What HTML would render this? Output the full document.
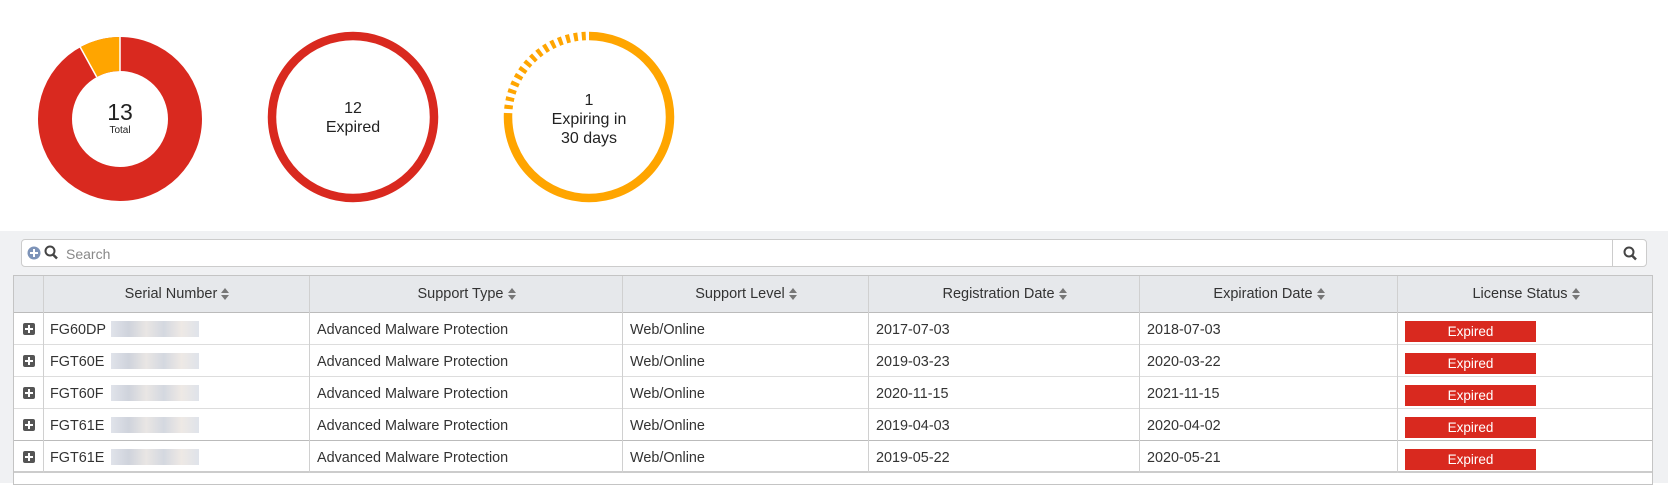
<!DOCTYPE html>
<html><head><meta charset="utf-8"><style>
*{margin:0;padding:0;box-sizing:border-box}
body{width:1668px;height:483px;overflow:hidden;background:#fff;font-family:"Liberation Sans",sans-serif;color:#333;position:relative}
.gray{position:absolute;left:0;top:231px;width:1668px;height:252px;background:#f0f1f3}
.search{position:absolute;left:21px;top:239px;width:1626px;height:28px;background:#fff;border:1px solid #ccc;border-radius:4px}
.search .btn{position:absolute;right:0;top:0;width:34px;height:26px;border-left:1px solid #ccc}
.search .ph{position:absolute;left:44px;top:6px;font-size:14px;color:#888}
.tbl{position:absolute;left:13px;top:275px;width:1640px;height:210px;background:#fff;border:1px solid #c4c4c4}
.hdr{position:absolute;left:0;top:0;width:100%;height:37px;background:#e6e8eb;border-bottom:1px solid #bbb}
.col{position:absolute;top:0;height:210px;border-left:1px solid #d0d0d0}
.ht{position:absolute;top:10px;font-size:14.5px;color:#333;text-align:center}
.row{position:absolute;left:0;width:100%;height:32px;border-bottom:1px solid #ddd}
.c{position:absolute;top:9px;font-size:14.4px;color:#333}
.plus{position:absolute;left:9px;top:10px;width:12px;height:12px;background:#555;border-radius:2px}
.plus:before{content:"";position:absolute;left:5px;top:2px;width:2px;height:8px;background:#fff}
.plus:after{content:"";position:absolute;left:2px;top:5px;width:8px;height:2px;background:#fff}
.badge{position:absolute;left:1391px;top:8px;width:131px;height:21px;background:#d9291f;color:#fff;font-size:13.5px;text-align:center;line-height:21px}
.blur{position:absolute;left:97px;top:8px;width:88px;height:16px;background:linear-gradient(90deg,#e0e3ea,#cfd3dc 20%,#e9e6e4 40%,#d4d8e0 60%,#eee9e5 80%,#dfe3ea)}
.sort{display:inline-block;vertical-align:middle;margin-left:4px;width:8px;height:12px;position:relative}
.sort:before{content:"";position:absolute;left:0;top:0;border-left:4px solid transparent;border-right:4px solid transparent;border-bottom:5px solid #777}
.sort:after{content:"";position:absolute;left:0;top:7px;border-left:4px solid transparent;border-right:4px solid transparent;border-top:5px solid #777}
.ctext{position:absolute;text-align:center;color:#222}
</style></head><body>
<svg width="700" height="231" style="position:absolute;left:0;top:0">
  <g transform="translate(120,119)">
    <circle r="65" fill="none" stroke="#d9291f" stroke-width="34"/>
    <path d="M0,-82 A82,82 0 0 0 -39.7,-71.7 L-23.3,-42 A48,48 0 0 1 0,-48 Z" fill="#ffa500"/>
    <line x1="0" y1="-47" x2="0" y2="-83" stroke="#fff" stroke-width="1.5"/>
    <line x1="-23.3" y1="-42" x2="-40.2" y2="-72.6" stroke="#fff" stroke-width="1.5"/>
  </g>
  <circle cx="353" cy="117" r="81" fill="none" stroke="#d9291f" stroke-width="8.5"/>
  <g transform="translate(589,117)">
    <path d="M0,-81 A81,81 0 1 1 -81,0" fill="none" stroke="#ffa500" stroke-width="8.5"/>
    <path d="M-81,0 A81,81 0 0 1 -3,-81" fill="none" stroke="#ffa500" stroke-width="8.5" stroke-dasharray="4 4"/>
  </g>
</svg>
<div class="ctext" style="left:80px;top:99px;width:80px;font-size:23px">13</div>
<div class="ctext" style="left:80px;top:125px;width:80px;font-size:10px">Total</div>
<div class="ctext" style="left:293px;top:99px;width:120px;font-size:16px;line-height:19px">12<br>Expired</div>
<div class="ctext" style="left:524px;top:91px;width:130px;font-size:16px;line-height:19px">1<br>Expiring in<br>30 days</div>
<div class="gray"></div>
<div class="search">
  <svg width="40" height="26" style="position:absolute;left:3px;top:0">
    <circle cx="9" cy="13" r="6.5" fill="#7d93b8"/>
    <rect x="8" y="9" width="2" height="8" fill="#fff"/><rect x="5" y="12" width="8" height="2" fill="#fff"/>
    <circle cx="25" cy="11" r="4.5" fill="none" stroke="#444" stroke-width="2"/>
    <line x1="28" y1="14.5" x2="32" y2="18.5" stroke="#444" stroke-width="2.5"/>
  </svg>
  <div class="ph">Search</div>
  <div class="btn"><svg width="34" height="26"><circle cx="16" cy="12" r="4.5" fill="none" stroke="#444" stroke-width="2"/><line x1="19" y1="15.5" x2="23" y2="19.5" stroke="#444" stroke-width="2.5"/></svg></div>
</div>
<div class="tbl">
  <div class="hdr">
    <div class="ht" style="left:30px;width:266px">Serial Number<span class="sort"></span></div>
    <div class="ht" style="left:296px;width:313px">Support Type<span class="sort"></span></div>
    <div class="ht" style="left:609px;width:246px">Support Level<span class="sort"></span></div>
    <div class="ht" style="left:855px;width:271px">Registration Date<span class="sort"></span></div>
    <div class="ht" style="left:1126px;width:258px">Expiration Date<span class="sort"></span></div>
    <div class="ht" style="left:1384px;width:256px">License Status<span class="sort"></span></div>
  </div>
  <div class="row" style="top:37px"><span class="plus"></span><span class="c" style="left:36px">FG60DP</span><span class="blur"></span><span class="c" style="left:303px">Advanced Malware Protection</span><span class="c" style="left:616px">Web/Online</span><span class="c" style="left:862px">2017-07-03</span><span class="c" style="left:1133px">2018-07-03</span><span class="badge">Expired</span></div>
  <div class="row" style="top:69px"><span class="plus"></span><span class="c" style="left:36px">FGT60E</span><span class="blur"></span><span class="c" style="left:303px">Advanced Malware Protection</span><span class="c" style="left:616px">Web/Online</span><span class="c" style="left:862px">2019-03-23</span><span class="c" style="left:1133px">2020-03-22</span><span class="badge">Expired</span></div>
  <div class="row" style="top:101px"><span class="plus"></span><span class="c" style="left:36px">FGT60F</span><span class="blur"></span><span class="c" style="left:303px">Advanced Malware Protection</span><span class="c" style="left:616px">Web/Online</span><span class="c" style="left:862px">2020-11-15</span><span class="c" style="left:1133px">2021-11-15</span><span class="badge">Expired</span></div>
  <div class="row" style="top:133px;border-bottom:1px solid #bbb"><span class="plus"></span><span class="c" style="left:36px">FGT61E</span><span class="blur"></span><span class="c" style="left:303px">Advanced Malware Protection</span><span class="c" style="left:616px">Web/Online</span><span class="c" style="left:862px">2019-04-03</span><span class="c" style="left:1133px">2020-04-02</span><span class="badge">Expired</span></div>
  <div class="row" style="top:165px;border-bottom:2px solid #ccc"><span class="plus"></span><span class="c" style="left:36px">FGT61E</span><span class="blur"></span><span class="c" style="left:303px">Advanced Malware Protection</span><span class="c" style="left:616px">Web/Online</span><span class="c" style="left:862px">2019-05-22</span><span class="c" style="left:1133px">2020-05-21</span><span class="badge">Expired</span></div>
  <div class="col" style="left:29px;height:197px"></div>
  <div class="col" style="left:295px;height:197px"></div>
  <div class="col" style="left:608px;height:197px"></div>
  <div class="col" style="left:854px;height:197px"></div>
  <div class="col" style="left:1125px;height:197px"></div>
  <div class="col" style="left:1383px;height:197px"></div>
</div>
</body></html>
